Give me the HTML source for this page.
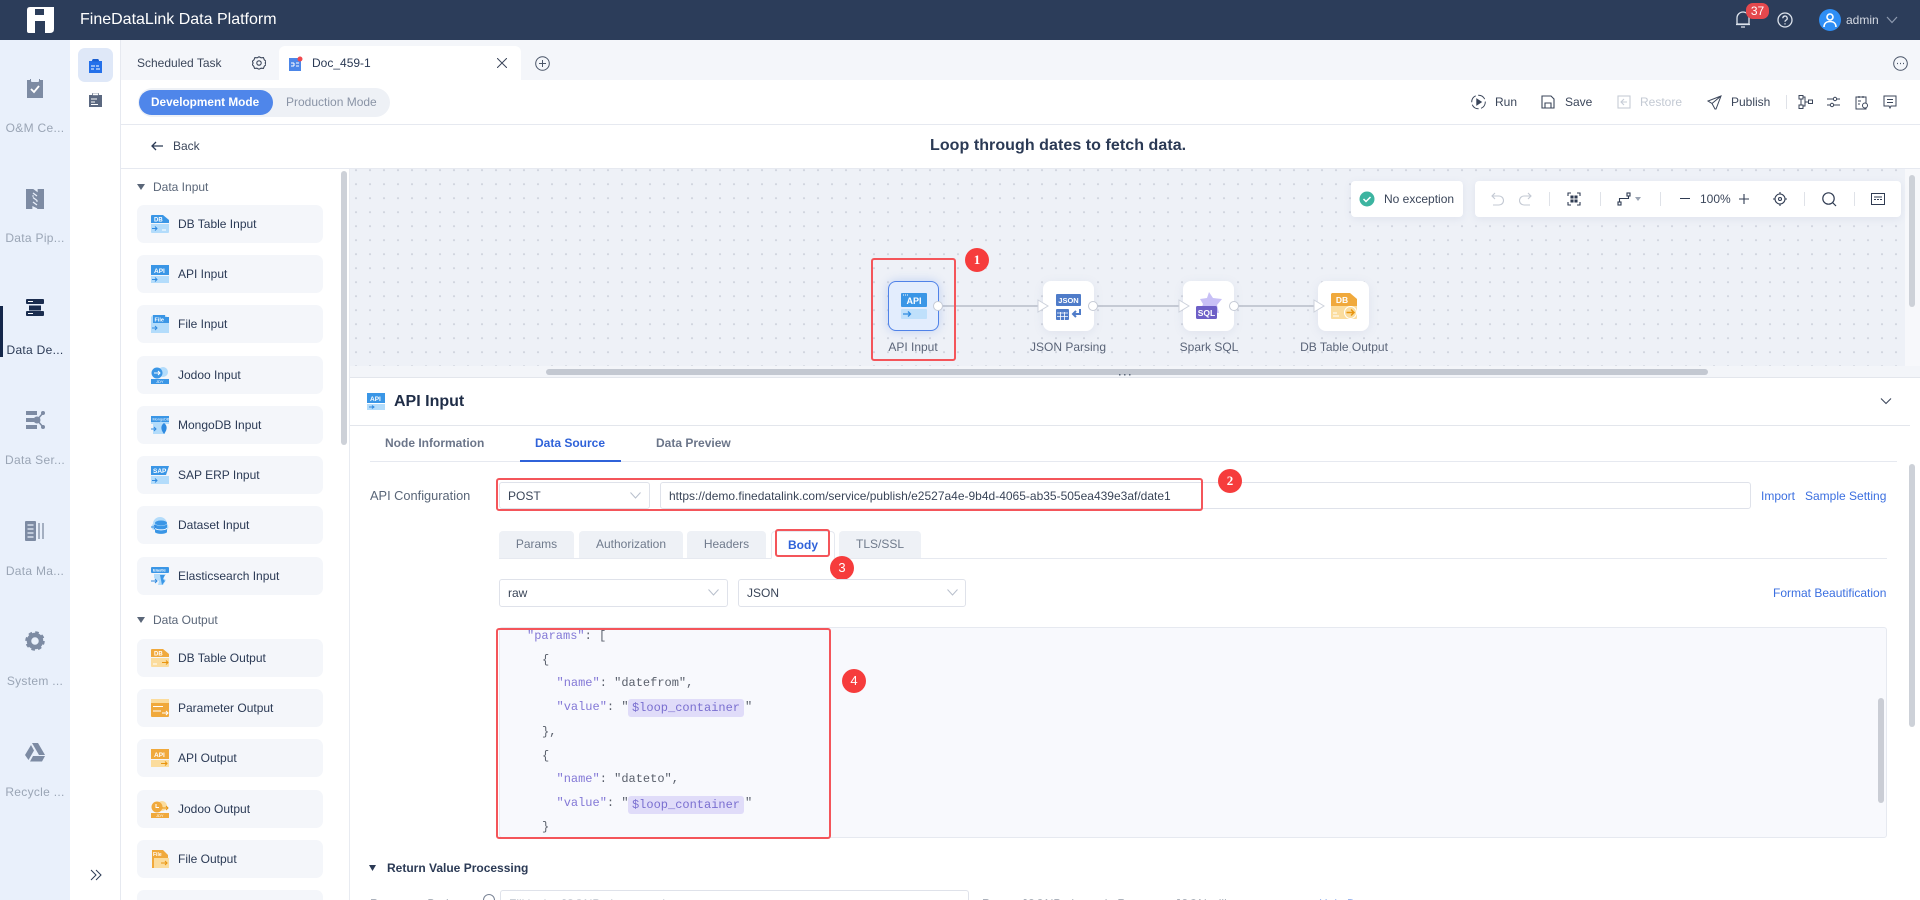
<!DOCTYPE html>
<html><head><meta charset="utf-8"><title>FineDataLink Data Platform</title>
<style>
html,body{margin:0;padding:0;width:1920px;height:900px;overflow:hidden;background:#fff}
body{position:relative;font-family:"Liberation Sans",sans-serif;font-size:12px;color:#2f3b52}
.a,.t,svg.i{position:absolute}
.t{white-space:nowrap;line-height:16px}
.c{text-align:center}
.item{position:absolute;left:137px;width:186px;height:38px;background:#f4f6fa;border-radius:7px}
.item svg{position:absolute;left:14px;top:10px}
.item span{position:absolute;left:41px;top:11px;line-height:16px;color:#2b3a55;white-space:nowrap}
.nav{position:absolute;left:0;width:70px;text-align:center;color:#9aa5b5;line-height:16px;white-space:nowrap;letter-spacing:.3px}
.st{position:absolute;top:531px;height:27px;line-height:27px;background:#eef1f6;border-radius:4px 4px 0 0;text-align:center;color:#6f7a8c;box-sizing:border-box}
.sel{position:absolute;background:#fff;border:1px solid #dfe2ea;border-radius:3px;box-sizing:border-box;line-height:26px;padding-left:8px;color:#3a4558}
.red{position:absolute;border:2px solid #f4555a;border-radius:3px;box-sizing:border-box}
.bd{position:absolute;width:24px;height:24px;border-radius:50%;background:#f63c3c;color:#fff;text-align:center;line-height:24px;font-size:13px}
.node{position:absolute;top:281px;width:51px;height:50px;background:#fff;border-radius:8px;box-shadow:0 2px 10px rgba(120,135,170,.12)}
.port{position:absolute;top:301px;width:8px;height:8px;border:1.5px solid #c5cad5;border-radius:50%;background:#fff}
.line{position:absolute;top:305px;height:2px;background:#c5cad4}
.sep{position:absolute;width:1px;background:#dfe2e8}
.lk{color:#3b6fe0}
.cl{position:absolute;font-family:"Liberation Mono",monospace;font-size:12px;line-height:16px;white-space:pre;color:#5a606c}
.k{color:#8378d6}
.chip{position:absolute;height:18px;line-height:18px;width:116px;background:#e0dcf9;color:#7a6fd0;border-radius:3px;font-family:"Liberation Mono",monospace;font-size:12px;text-align:center}
svg text{font-family:"Liberation Sans",sans-serif}
</style></head><body>

<!-- header -->
<div class="a" style="left:0;top:0;width:1920px;height:40px;background:#2c3d5a"></div>
<svg class="i" style="left:27px;top:7px" width="27" height="26" viewBox="0 0 27 26"><path d="M3 0H27V22Q27 26 23 26H18V14H8V26H2Q0 26 0 24V3Q0 0 3 0ZM8 2V8H17V2Z" fill="#fff" fill-rule="evenodd"/></svg>
<div class="t" style="left:80px;top:12px;font-size:16px;color:#fff">FineDataLink Data Platform</div>
<svg class="i" style="left:1735px;top:11px" width="16" height="18" viewBox="0 0 16 18" fill="none" stroke="#dde3ec" stroke-width="1.3"><path d="M2 13V7a6 6 0 0 1 12 0v6zM1 13.500h14M6 16h4"/></svg>
<div class="a c" style="left:1746px;top:3px;width:23px;height:16px;line-height:16px;background:#e5484d;border-radius:7px;color:#fff;font-size:12px">37</div>
<svg class="i" style="left:1777px;top:12px" width="16" height="16" viewBox="0 0 16 16" fill="none" stroke="#dde3ec" stroke-width="1.3"><circle cx="8" cy="8" r="7"/><path d="M5.800 6.200a2.200 2.200 0 1 1 3.200 2c-.7.4-1 .8-1 1.600M8 11.300v1.200"/></svg>
<svg class="i" style="left:1819px;top:9px" width="22" height="22" viewBox="0 0 22 22"><circle cx="11" cy="11" r="11" fill="#2e8ef5"/><circle cx="11" cy="8" r="3" fill="none" stroke="#fff" stroke-width="1.600"/><path d="M5 18c0-4 3-5.500 6-5.500s6 1.500 6 5.500" fill="none" stroke="#fff" stroke-width="1.600"/></svg>
<div class="t" style="left:1846px;top:12px;color:#d5dae3">admin</div>
<svg class="i" style="left:1886px;top:16px" width="12" height="8" viewBox="0 0 12 8" fill="none" stroke="#8f9bb0" stroke-width="1.200"><path d="M1 1l5 5.500L11 1"/></svg>

<!-- far left nav -->
<div class="a" style="left:0;top:40px;width:70px;height:860px;background:#e9f0fb"></div>
<svg class="i" style="left:26px;top:78px" width="18" height="20" viewBox="0 0 18 20"><path d="M1 2h3V1h10v1h3v18H1z" fill="#7d8ba3"/><rect x="5" y="0" width="8" height="4" rx="1" fill="#e9f0fb"/><path d="M5 11l3 3 5-6" fill="none" stroke="#fff" stroke-width="1.800"/></svg>
<div class="nav" style="top:120px">O&amp;M Ce...</div>
<svg class="i" style="left:26px;top:189px" width="18" height="20" viewBox="0 0 18 20"><rect width="18" height="20" fill="#7d8ba3"/><path d="M7 -1h4v3zM7 4l4 3M7 8.500l4 3M7 13l4 3M7 20v-2l4 2z" stroke="#e9f0fb" stroke-width="1.300" fill="#e9f0fb"/><path d="M7 6v2M11 11v2" stroke="#e9f0fb"/></svg>
<div class="nav" style="top:230px">Data Pip...</div>
<div class="a" style="left:0;top:306px;width:3px;height:51px;background:#14274a"></div>
<svg class="i" style="left:26px;top:299px" width="18" height="18" viewBox="0 0 18 18"><rect x="0" y="0" width="18" height="5" rx="1" fill="#1b2d4f"/><rect x="3" y="6.500" width="12" height="5" fill="#1b2d4f"/><rect x="0" y="12" width="18" height="5" rx="1" fill="#1b2d4f"/><path d="M2 2.500h5M2 14.500h5" stroke="#fff"/></svg>
<div class="nav" style="top:342px;color:#2b3a55">Data De...</div>
<svg class="i" style="left:26px;top:410px" width="19" height="20" viewBox="0 0 19 20" fill="#7d8ba3"><rect x="0" y="1" width="11" height="4"/><rect x="0" y="8" width="8" height="4"/><rect x="0" y="15" width="11" height="4"/><circle cx="11" cy="10" r="3.500"/><circle cx="17" cy="3" r="2"/><circle cx="17" cy="17" r="2"/><path d="M11 10l6-7M11 10l6 7" stroke="#7d8ba3" stroke-width="1.500"/></svg>
<div class="nav" style="top:452px">Data Ser...</div>
<svg class="i" style="left:25px;top:521px" width="20" height="20" viewBox="0 0 20 20"><rect x="0" y="0" width="11" height="20" rx="1" fill="#7d8ba3"/><path d="M2.500 4h6M2.500 8h6M2.500 12h6M2.500 16h6" stroke="#e9f0fb" stroke-width="1.200"/><path d="M14 2v16M18 2v16" stroke="#a4afc1" stroke-width="2"/></svg>
<div class="nav" style="top:563px">Data Ma...</div>
<svg class="i" style="left:25px;top:631px" width="20" height="20" viewBox="0 0 20 20"><circle cx="10" cy="10" r="6" fill="none" stroke="#7d8ba3" stroke-width="4.500"/><circle cx="10" cy="10" r="8.500" fill="none" stroke="#7d8ba3" stroke-width="2.500" stroke-dasharray="3.500 3.170"/></svg>
<div class="nav" style="top:673px">System ...</div>
<svg class="i" style="left:25px;top:743px" width="20" height="19" viewBox="0 0 20 19" fill="#7d8ba3"><path d="M7 0h6l7 12h-6zM6 2l3 5.500L3.500 17 0 12zM8 13h12l-3 5.500H5z"/></svg>
<div class="nav" style="top:784px">Recycle ...</div>

<!-- second column -->
<div class="a" style="left:70px;top:40px;width:50px;height:860px;background:#fff;border-right:1px solid #e6e9f0"></div>
<div class="a" style="left:78px;top:48px;width:35px;height:34px;background:#dfe8f8;border-radius:7px"></div>
<svg class="i" style="left:89px;top:59px" width="13" height="14" viewBox="0 0 13 14"><path d="M0 2h3V1h7v1h3v12H0z" fill="#2470ea"/><rect x="3.500" y="0" width="6" height="2.500" fill="#1b5fd0"/><path d="M2 7h4M2 10h3M7 7h3M7 10h4" stroke="#fff"/></svg>
<svg class="i" style="left:89px;top:93px" width="13" height="14" viewBox="0 0 13 14"><path d="M0 2h3V1h7v1h3v12H0z" fill="#5b6880"/><rect x="3.500" y="0" width="6" height="2.500" fill="#fff" stroke="#5b6880" stroke-width=".6"/><path d="M2 6h6M2 9h4M2 11.500h7" stroke="#fff"/></svg>
<svg class="i" style="left:90px;top:869px" width="12" height="12" viewBox="0 0 12 12" fill="none" stroke="#2b3a55" stroke-width="1"><path d="M1 1l5 5-5 5M6 1l5 5-5 5"/></svg>

<!-- tab strip -->
<div class="a" style="left:121px;top:40px;width:1799px;height:40px;background:#f4f6fa"></div>
<div class="t" style="left:137px;top:55px;color:#3b465a">Scheduled Task</div>
<svg class="i" style="left:252px;top:56px" width="14" height="14" viewBox="0 0 14 14" fill="none" stroke="#3b465a" stroke-width="1.100"><path d="M7 .8l2.100 1 2.300-.2.900 2.200 1.700 1.500-.8 1.700.8 1.700-1.700 1.500-.9 2.200-2.300-.2-2.100 1-2.100-1-2.300.2-.9-2.200L.3 8.700 1.100 7 .3 5.300 2 3.800l.9-2.200 2.300.2z"/><circle cx="7" cy="7" r="2.200"/></svg>
<div class="a" style="left:279px;top:46px;width:242px;height:34px;background:#fff;border-radius:6px 6px 0 0"></div>
<svg class="i" style="left:289px;top:56px" width="14" height="15" viewBox="0 0 14 15"><rect x="0" y="2" width="12" height="13" fill="#4c86e8"/><path d="M2 7h3M2 10h3M7 7h3M7 10h3M5 7v3" stroke="#fff"/><circle cx="11" cy="3" r="2.500" fill="#f0484e"/></svg>
<div class="t" style="left:312px;top:55px;color:#2b3a55">Doc_459-1</div>
<svg class="i" style="left:497px;top:58px" width="10" height="10" viewBox="0 0 10 10" stroke="#3b465a" stroke-width="1"><path d="M0 0l10 10M10 0L0 10"/></svg>
<svg class="i" style="left:535px;top:56px" width="15" height="15" viewBox="0 0 15 15" fill="none" stroke="#4a5568" stroke-width="1"><circle cx="7.500" cy="7.500" r="6.800"/><path d="M7.500 4v7M4 7.500h7"/></svg>
<svg class="i" style="left:1893px;top:56px" width="15" height="15" viewBox="0 0 15 15" fill="none" stroke="#4a5568" stroke-width="1"><circle cx="7.500" cy="7.500" r="6.800"/><path d="M4 7.500h1M7 7.500h1M10 7.500h1" stroke-width="1.300"/></svg>

<!-- mode row -->
<div class="a" style="left:121px;top:124px;width:1799px;height:1px;background:#e6e9f0"></div>
<div class="a" style="left:138px;top:88px;width:252px;height:29px;background:#eef1f6;border-radius:15px"></div>
<div class="a" style="left:139px;top:90px;width:134px;height:25px;background:#4f86ea;border-radius:13px"></div>
<div class="t" style="left:151px;top:94px;color:#fff;font-weight:bold;font-size:11.800px">Development Mode</div>
<div class="t" style="left:286px;top:94px;color:#8a94a6">Production Mode</div>

<svg class="i" style="left:1471px;top:94px" width="15" height="16" viewBox="0 0 15 16" fill="none" stroke="#3b465a" stroke-width="1"><circle cx="7.500" cy="8" r="6.800" stroke-dasharray="8 2.500"/><path d="M5.800 5l4.500 3-4.500 3z" fill="#3b465a"/></svg>
<div class="t" style="left:1495px;top:94px;color:#3b465a">Run</div>
<svg class="i" style="left:1541px;top:95px" width="14" height="14" viewBox="0 0 14 14" fill="none" stroke="#3b465a" stroke-width="1.100"><path d="M1 1h9l3 3v9H1zM4 13V8h6v5"/></svg>
<div class="t" style="left:1565px;top:94px;color:#3b465a">Save</div>
<svg class="i" style="left:1617px;top:95px" width="14" height="14" viewBox="0 0 14 14" fill="none" stroke="#c6ccd6" stroke-width="1.100"><rect x="1" y="1" width="12" height="12"/><path d="M10 7H4M7 4L4 7l3 3"/></svg>
<div class="t" style="left:1640px;top:94px;color:#c3c9d3">Restore</div>
<svg class="i" style="left:1707px;top:95px" width="15" height="15" viewBox="0 0 15 15" fill="none" stroke="#3b465a" stroke-width="1"><path d="M14 1L1 6l4 2.500L8 14l1 0zM14 1L5 8.500"/></svg>
<div class="t" style="left:1731px;top:94px;color:#3b465a">Publish</div>
<div class="sep" style="left:1786px;top:95px;height:14px"></div>
<svg class="i" style="left:1798px;top:95px" width="15" height="14" viewBox="0 0 15 14" fill="none" stroke="#3b465a" stroke-width="1"><rect x="1" y="0.500" width="4" height="3.500"/><rect x="1" y="10" width="4" height="3.500"/><rect x="10.500" y="5" width="4" height="3.500"/><path d="M3 4v6M5 2h2v9H5M7 7h3.500"/></svg>
<svg class="i" style="left:1827px;top:96px" width="13" height="12" viewBox="0 0 13 12" fill="none" stroke="#3b465a" stroke-width="1"><path d="M0 3h13M0 9h13"/><circle cx="8" cy="3" r="1.700" fill="#fff"/><circle cx="5" cy="9" r="1.700" fill="#fff"/></svg>
<svg class="i" style="left:1855px;top:95px" width="14" height="15" viewBox="0 0 14 15" fill="none" stroke="#3b465a" stroke-width="1"><path d="M1 2h10v12H1zM4 1v2M8 1v2M3 6h3M3 9h2"/><circle cx="10" cy="10.500" r="2.500" fill="#fff"/></svg>
<svg class="i" style="left:1883px;top:95px" width="14" height="14" viewBox="0 0 14 14" fill="none" stroke="#3b465a" stroke-width="1"><path d="M1 1h12v10H8l-1 2-1-2H1zM4 4.500h6M4 7.500h6"/></svg>

<!-- back row -->
<div class="a" style="left:121px;top:168px;width:1799px;height:1px;background:#e6e9f0"></div>
<svg class="i" style="left:151px;top:141px" width="12" height="10" viewBox="0 0 12 10" fill="none" stroke="#2b3a55" stroke-width="1.300"><path d="M12 5H1M5 1L1 5l4 4"/></svg>
<div class="t" style="left:173px;top:138px;color:#3b465a">Back</div>
<div class="t" style="left:930px;top:138px;font-size:16px;font-weight:bold;color:#2b3a55;letter-spacing:.06px">Loop through dates to fetch data.</div>

<!-- palette -->
<div class="a" style="left:349px;top:169px;width:1px;height:731px;background:#e8ebf1"></div>
<div class="a" style="left:341px;top:171px;width:6px;height:274px;background:#cdd1d8;border-radius:3px"></div>
<svg class="i" style="left:137px;top:184px" width="8" height="6"><path d="M0 0h8L4 6z" fill="#5a6678"/></svg>
<div class="t" style="left:153px;top:179px;color:#5a6678">Data Input</div>

<div class="item" style="top:205px"><svg width="18" height="18" viewBox="0 0 18 18"><path d="M0 1a1 1 0 0 1 1-1h11l6 5v3H0z" fill="#3a96e6"/><path d="M0 9h18v8a1 1 0 0 1-1 1H1a1 1 0 0 1-1-1z" fill="#b3dcfb"/><text x="3" y="6.500" font-size="6" fill="#fff" font-weight="bold">DB</text><path d="M1 13.500h5M4 11.500l2 2-2 2" stroke="#2f8ae0" fill="none"/><path d="M11 15h4" stroke="#fff"/></svg><span>DB Table Input</span></div>
<div class="item" style="top:255px"><svg width="18" height="18" viewBox="0 0 18 18"><rect width="18" height="10" fill="#3a96e6"/><rect y="11" width="18" height="7" fill="#b3dcfb"/><text x="3" y="8" font-size="6.500" fill="#fff" font-weight="bold">API</text><path d="M1 14.500h5M4 12.500l2 2-2 2" stroke="#2f8ae0" fill="none"/></svg><span>API Input</span></div>
<div class="item" style="top:305px"><svg width="18" height="18" viewBox="0 0 18 18"><path d="M2 0h12l4 4v14H0V2z" fill="#b3dcfb"/><path d="M2 0h12v2H18v6H2z" fill="#3a96e6"/><text x="3.500" y="6.500" font-size="5.500" fill="#fff" font-weight="bold">File</text><path d="M1 13h5M4 11l2 2-2 2" stroke="#2f8ae0" fill="none"/></svg><span>File Input</span></div>
<div class="item" style="top:356px"><svg width="18" height="18" viewBox="0 0 18 18"><circle cx="12" cy="6" r="5" fill="#b3dcfb"/><circle cx="6" cy="7" r="5.500" fill="#3a96e6"/><path d="M3 7h6M7 5l2 2-2 2" stroke="#fff" fill="none"/><rect y="13" width="18" height="5" fill="#3a96e6"/><text x="5" y="17" font-size="4" fill="#fff">JDY</text></svg><span>Jodoo Input</span></div>
<div class="item" style="top:406px"><svg width="18" height="18" viewBox="0 0 18 18"><rect width="18" height="6" fill="#3a96e6"/><path d="M0 6h18v2h-4v10H2V8H0z" fill="#b3dcfb"/><text x="1.500" y="4.500" font-size="3.800" fill="#fff">MongoDB</text><path d="M13 7c3 2 4 6 0 11-4-5-3-9 0-11z" fill="#2f8ae0"/><path d="M0 13h5M3 11l2 2-2 2" stroke="#2f8ae0" fill="none"/></svg><span>MongoDB Input</span></div>
<div class="item" style="top:456px"><svg width="18" height="18" viewBox="0 0 18 18"><path d="M0 0h18l-3 9H0z" fill="#3a96e6"/><rect y="10" width="18" height="8" fill="#b3dcfb"/><text x="2" y="7" font-size="6.500" fill="#fff" font-weight="bold">SAP</text><path d="M1 14.500h5M4 12.500l2 2-2 2" stroke="#2f8ae0" fill="none"/></svg><span>SAP ERP Input</span></div>
<div class="item" style="top:506px"><svg width="18" height="18" viewBox="0 0 18 18"><path d="M2 8a7 7 0 0 1 14 0c2 1 2 6-1 6H3C0 14 0 9 2 8z" fill="#b3dcfb"/><ellipse cx="10" cy="7" rx="6" ry="2.500" fill="#3a96e6"/><path d="M4 8v8c1 2.500 11 2.500 12 0V8c-1 2.500-11 2.500-12 0z" fill="#3a96e6"/><path d="M4 12c1 2.500 11 2.500 12 0" stroke="#fff" fill="none"/><path d="M0 11h5M3 9l2 2-2 2" stroke="#2f8ae0" fill="none"/></svg><span>Dataset Input</span></div>
<div class="item" style="top:557px"><svg width="18" height="18" viewBox="0 0 18 18"><rect width="18" height="6" rx="1" fill="#3a96e6"/><text x="2" y="4.500" font-size="4" fill="#fff" font-weight="bold">Elastic</text><path d="M3 7h12l-3 4 3 2-3 5H7l1-4-5-3z" fill="#b3dcfb"/><path d="M9 8l5 0-2 4 2 2-3 4z" fill="#3a96e6"/><path d="M0 14h6M4 12l2 2-2 2" stroke="#2f8ae0" fill="none"/></svg><span>Elasticsearch Input</span></div>

<svg class="i" style="left:137px;top:617px" width="8" height="6"><path d="M0 0h8L4 6z" fill="#5a6678"/></svg>
<div class="t" style="left:153px;top:612px;color:#5a6678">Data Output</div>

<div class="item" style="top:639px"><svg width="18" height="18" viewBox="0 0 18 18"><path d="M0 1a1 1 0 0 1 1-1h11l6 5v3H0z" fill="#f0a93c"/><path d="M0 9h18v8a1 1 0 0 1-1 1H1a1 1 0 0 1-1-1z" fill="#fbdc9d"/><text x="3" y="6.500" font-size="6" fill="#fff" font-weight="bold">DB</text><path d="M11 13.500h6M15 11.500l2 2-2 2" stroke="#e8950f" fill="none"/><path d="M2 15h4" stroke="#fff"/></svg><span>DB Table Output</span></div>
<div class="item" style="top:689px"><svg width="18" height="18" viewBox="0 0 18 18"><rect width="18" height="18" rx="1" fill="#f0a93c"/><rect width="18" height="4" fill="#fbdc9d"/><path d="M2 7.500h10M2 12h8M11 14h6M15 12l2 2-2 2" stroke="#fff" fill="none"/></svg><span>Parameter Output</span></div>
<div class="item" style="top:739px"><svg width="18" height="18" viewBox="0 0 18 18"><rect width="18" height="10" fill="#f0a93c"/><rect y="11" width="18" height="7" fill="#fbdc9d"/><text x="3" y="8" font-size="6.500" fill="#fff" font-weight="bold">API</text><path d="M10 14.500h6M14 12.500l2 2-2 2" stroke="#e8950f" fill="none"/></svg><span>API Output</span></div>
<div class="item" style="top:790px"><svg width="18" height="18" viewBox="0 0 18 18"><circle cx="11" cy="6" r="5" fill="#fbdc9d"/><circle cx="6" cy="7" r="5.500" fill="#f0a93c"/><path d="M5 4v3.500h3" stroke="#fff" fill="none"/><rect y="13" width="18" height="5" fill="#f0a93c"/><text x="5" y="17" font-size="4" fill="#fff">JDY</text><path d="M11 8h6M15 6l2 2-2 2" stroke="#e8950f" fill="none"/></svg><span>Jodoo Output</span></div>
<div class="item" style="top:840px"><svg width="18" height="18" viewBox="0 0 18 18"><path d="M1 0h11l5 5v13H1z" fill="#f0a93c"/><path d="M3 8h15v10H3z" fill="#fbdc9d"/><text x="2" y="6" font-size="5" fill="#fff" font-weight="bold">File</text><path d="M10 13h6M14 11l2 2-2 2" stroke="#e8950f" fill="none"/></svg><span>File Output</span></div>
<div class="item" style="top:890px"></div>

<!-- canvas -->
<div class="a" style="left:350px;top:169px;width:1570px;height:197px;background-color:#eef1f7;background-image:radial-gradient(circle at 6px 1.200px,#d0d4de .8px,transparent 1.300px);background-size:14px 14px"></div>
<div class="a" style="left:1905px;top:169px;width:15px;height:197px;background:#f7f8fb"></div>
<div class="a" style="left:1909px;top:175px;width:6px;height:132px;background:#cdd1d8;border-radius:3px"></div>
<div class="a" style="left:350px;top:366px;width:1570px;height:11px;background:#f3f5f9;border-bottom:1px solid #e3e6ec"></div>
<div class="a" style="left:546px;top:369px;width:1162px;height:6px;background:#c3c8d1;border-radius:3px"></div>
<svg class="i" style="left:1119px;top:374px" width="14" height="4" fill="#5a6678"><rect x="0" width="1.500" height="1.500"/><rect x="5" width="1.500" height="1.500"/><rect x="10" width="1.500" height="1.500"/></svg>

<div class="a" style="left:1351px;top:181px;width:112px;height:36px;background:#fff;border-radius:4px;box-shadow:0 2px 8px rgba(120,135,170,.12)"></div>
<svg class="i" style="left:1359px;top:191px" width="16" height="16" viewBox="0 0 16 16"><circle cx="8" cy="8" r="7.500" fill="#3cb4a0"/><path d="M4.500 8l2.500 2.500 4.500-4.500" stroke="#fff" stroke-width="1.500" fill="none"/></svg>
<div class="t" style="left:1384px;top:191px;color:#3b465a">No exception</div>
<div class="a" style="left:1475px;top:181px;width:426px;height:36px;background:#fff;border-radius:4px;box-shadow:0 2px 8px rgba(120,135,170,.12)"></div>
<svg class="i" style="left:1491px;top:192px" width="13" height="14" viewBox="0 0 13 14" fill="none" stroke="#c3c9d3" stroke-width="1.100"><path d="M4 1L1 4l3 3M1 4h7a4 4 0 0 1 0 9H2"/></svg>
<svg class="i" style="left:1519px;top:192px" width="13" height="14" viewBox="0 0 13 14" fill="none" stroke="#c3c9d3" stroke-width="1.100"><path d="M9 1l3 3-3 3M12 4H5a4 4 0 0 0 0 9h6"/></svg>
<div class="sep" style="left:1549px;top:192px;height:14px"></div>
<svg class="i" style="left:1567px;top:192px" width="14" height="14" viewBox="0 0 14 14" fill="none" stroke="#2f3b52" stroke-width="1.100"><path d="M1 4V1h3M10 1h3v3M13 10v3h-3M4 13H1v-3"/><path d="M4 4h2v2H4zM8 4h2v2H8zM4 8h2v2H4zM8 8h2v2H8z" fill="#2f3b52"/></svg>
<div class="sep" style="left:1600px;top:192px;height:14px"></div>
<svg class="i" style="left:1617px;top:192px" width="14" height="14" viewBox="0 0 14 14" fill="none" stroke="#2f3b52" stroke-width="1.100"><rect x="1" y="10" width="3" height="3"/><rect x="10" y="1" width="3" height="3"/><path d="M2.500 10V6.500h9V4"/></svg>
<svg class="i" style="left:1635px;top:197px" width="6" height="4"><path d="M0 0h6L3 4z" fill="#9aa3b2"/></svg>
<div class="sep" style="left:1660px;top:192px;height:14px"></div>
<div class="a" style="left:1680px;top:198px;width:10px;height:1px;background:#2f3b52"></div>
<div class="t" style="left:1700px;top:191px;color:#3b465a">100%</div>
<svg class="i" style="left:1739px;top:194px" width="10" height="10" stroke="#2f3b52" stroke-width="1.100"><path d="M5 0v10M0 5h10"/></svg>
<svg class="i" style="left:1773px;top:192px" width="14" height="14" viewBox="0 0 14 14" fill="none" stroke="#2f3b52" stroke-width="1.100"><circle cx="7" cy="7" r="5"/><circle cx="7" cy="7" r="1.500"/><path d="M7 0v2.500M7 11.500V14M0 7h2.500M11.500 7H14"/></svg>
<div class="sep" style="left:1804px;top:192px;height:14px"></div>
<svg class="i" style="left:1822px;top:192px" width="15" height="15" viewBox="0 0 15 15" fill="none" stroke="#2f3b52" stroke-width="1.200"><circle cx="6.500" cy="6.500" r="5.700"/><path d="M10.500 10.500l3.500 3.500"/></svg>
<div class="sep" style="left:1854px;top:192px;height:14px"></div>
<svg class="i" style="left:1871px;top:193px" width="14" height="12" viewBox="0 0 14 12" fill="none" stroke="#2f3b52" stroke-width="1"><rect x=".5" y=".5" width="13" height="11"/><path d="M3 4h8M3 6.500h2M6 6.500h2M9 6.500h2" stroke-width=".9"/></svg>

<!-- flow -->
<div class="line" style="left:943px;width:95px"></div>
<div class="line" style="left:1097px;width:82px"></div>
<div class="line" style="left:1238px;width:76px"></div>
<div class="node" style="left:888px;background:#e3edfd;border:1px solid #4f82e8;box-sizing:border-box;box-shadow:0 0 10px rgba(79,130,232,.3)"></div>
<svg class="i" style="left:901px;top:293px" width="26" height="27" viewBox="0 0 26 27"><rect width="26" height="14" rx="1" fill="#3a96e6"/><rect y="16" width="26" height="10" rx="1" fill="#bfe0fb"/><text x="13" y="11" text-anchor="middle" font-size="9" font-weight="bold" fill="#fff">API</text><path d="M2 2h5" stroke="#fff" stroke-dasharray="1 1"/><path d="M2 21h7M7 18.500l2.500 2.500L7 23.500" stroke="#2f8ae0" stroke-width="1.300" fill="none"/></svg>
<div class="node" style="left:1043px"></div>
<svg class="i" style="left:1056px;top:294px" width="26" height="26" viewBox="0 0 26 26"><rect width="25" height="12" rx="1" fill="#4f7cc9"/><text x="12.500" y="9" text-anchor="middle" font-size="7.500" font-weight="bold" fill="#fff">JSON</text><rect x="0" y="15" width="13" height="11" rx="1" fill="#4f7cc9"/><path d="M1 19h11M1 22.500h11M4.500 18v8M8.500 18v8" stroke="#fff" stroke-width=".8"/><path d="M24 15v5h-6M20 17l-3 3 3 3" stroke="#4f7cc9" stroke-width="2" fill="none"/></svg>
<div class="node" style="left:1183px"></div>
<svg class="i" style="left:1196px;top:292px" width="30" height="28" viewBox="0 0 30 28"><path d="M13 0l4 6 9 1-5 6 2 8-10-1-9 0 3-8-3-5 7-1z" fill="#c8c0f6"/><rect y="14" width="21" height="13" rx="1.500" fill="#6d5fc7"/><text x="10.500" y="24" text-anchor="middle" font-size="8.500" font-weight="bold" fill="#fff">SQL</text></svg>
<div class="node" style="left:1318px"></div>
<svg class="i" style="left:1331px;top:293px" width="26" height="26" viewBox="0 0 26 26"><path d="M1 0h18l7 6v8H0V1z" fill="#f0a93c"/><path d="M0 13h26v12a1 1 0 0 1-1 1H1a1 1 0 0 1-1-1z" fill="#fbdc9d"/><text x="11" y="10" text-anchor="middle" font-size="8.500" font-weight="bold" fill="#fff">DB</text><path d="M2 20h4M2 23h6" stroke="#fff"/><circle cx="19.500" cy="19.500" r="6" fill="#fbdc9d" stroke="#fff"/><path d="M15.500 19.500h7M20 16.500l3 3-3 3" stroke="#e8950f" stroke-width="1.500" fill="none"/></svg>
<div class="port" style="left:933px"></div>
<div class="port" style="left:1088px"></div>
<div class="port" style="left:1229px"></div>
<svg class="i" style="left:1037px;top:299px" width="12" height="14"><path d="M1 1l10 6-10 6z" fill="#fff" stroke="#cdd2dc"/></svg>
<svg class="i" style="left:1178px;top:299px" width="12" height="14"><path d="M1 1l10 6-10 6z" fill="#fff" stroke="#cdd2dc"/></svg>
<svg class="i" style="left:1313px;top:299px" width="12" height="14"><path d="M1 1l10 6-10 6z" fill="#fff" stroke="#cdd2dc"/></svg>
<div class="t c" style="left:863px;top:339px;width:100px;color:#5a6478">API Input</div>
<div class="t c" style="left:1018px;top:339px;width:100px;color:#5a6478">JSON Parsing</div>
<div class="t c" style="left:1159px;top:339px;width:100px;color:#5a6478">Spark SQL</div>
<div class="t c" style="left:1284px;top:339px;width:120px;color:#5a6478">DB Table Output</div>
<div class="red" style="left:871px;top:258px;width:85px;height:103px"></div>
<div class="bd" style="left:965px;top:248px;font-family:'Liberation Serif',serif;font-weight:bold">1</div>

<!-- panel -->
<svg class="i" style="left:367px;top:393px" width="18" height="17" viewBox="0 0 18 17"><rect width="18" height="10" fill="#3a96e6"/><rect y="11" width="18" height="6" fill="#b3dcfb"/><text x="3" y="8" font-size="6.500" fill="#fff" font-weight="bold">API</text><path d="M2 14h5M5 12.500l2 1.500-2 1.500" stroke="#2f8ae0" fill="none"/></svg>
<div class="t" style="left:394px;top:394px;font-size:16px;font-weight:bold;color:#1f2d47">API Input</div>
<svg class="i" style="left:1880px;top:398px" width="12" height="7" viewBox="0 0 12 7" fill="none" stroke="#3b465a" stroke-width="1.100"><path d="M1 .5l5 5 5-5"/></svg>
<div class="a" style="left:350px;top:425px;width:1560px;height:1px;background:#e3e6ec"></div>
<div class="t" style="left:385px;top:435px;font-weight:bold;color:#6b7589">Node Information</div>
<div class="t" style="left:535px;top:435px;font-weight:bold;color:#2f62d9">Data Source</div>
<div class="t" style="left:656px;top:435px;font-weight:bold;color:#6b7589">Data Preview</div>
<div class="a" style="left:370px;top:461px;width:1527px;height:1px;background:#e6e9f0"></div>
<div class="a" style="left:520px;top:460px;width:101px;height:2px;background:#2f62d9"></div>
<div class="a" style="left:1909px;top:464px;width:6px;height:263px;background:#cdd1d8;border-radius:3px"></div>

<div class="t" style="left:370px;top:488px;font-size:12.800px;color:#5a6678">API Configuration</div>
<div class="sel" style="left:499px;top:482px;width:151px;height:27px">POST</div>
<svg class="i chev" style="left:630px;top:492px" width="11" height="7" viewBox="0 0 11 7" fill="none" stroke="#b8bfcc"><path d="M.5.500l5 5.500 5-5.500"/></svg>
<div class="sel" style="left:660px;top:482px;width:1091px;height:27px">https://demo.finedatalink.com/service/publish/e2527a4e-9b4d-4065-ab35-505ea439e3af/date1</div>
<div class="red" style="left:496px;top:478px;width:707px;height:33px"></div>
<div class="bd" style="left:1218px;top:469px;font-family:'Liberation Serif',serif;font-weight:bold">2</div>
<div class="t lk" style="left:1761px;top:488px">Import</div>
<div class="t lk" style="left:1805px;top:488px">Sample Setting</div>

<div class="a" style="left:499px;top:558px;width:1388px;height:1px;background:#e6e9f0"></div>
<div class="st" style="left:499px;width:75px">Params</div>
<div class="st" style="left:579px;width:104px">Authorization</div>
<div class="st" style="left:687px;width:79px">Headers</div>
<div class="st" style="left:771px;width:64px;background:#fff;border:1px solid #e6e9f0;border-bottom:1px solid #fff;height:28px;color:#2f62d9;font-weight:bold;line-height:26px">Body</div>
<div class="st" style="left:839px;width:82px">TLS/SSL</div>
<div class="red" style="left:775px;top:529px;width:55px;height:28px"></div>
<div class="bd" style="left:830px;top:556px">3</div>

<div class="sel" style="left:499px;top:579px;width:229px;height:28px">raw</div>
<svg class="i" style="left:708px;top:589px" width="11" height="7" viewBox="0 0 11 7" fill="none" stroke="#b8bfcc"><path d="M.5.500l5 5.500 5-5.500"/></svg>
<div class="sel" style="left:738px;top:579px;width:228px;height:28px">JSON</div>
<svg class="i" style="left:947px;top:589px" width="11" height="7" viewBox="0 0 11 7" fill="none" stroke="#b8bfcc"><path d="M.5.500l5 5.500 5-5.500"/></svg>
<div class="t lk" style="left:1773px;top:585px">Format Beautification</div>

<div class="a" style="left:499px;top:627px;width:1388px;height:211px;background:#f8f9fd;border:1px solid #e6e9f0;box-sizing:border-box;border-radius:3px"></div>
<div class="a" style="left:1878px;top:698px;width:6px;height:105px;background:#cacdd5;border-radius:3px"></div>
<div class="cl" style="left:527px;top:628px"><span class="k">"params"</span>: [</div>
<div class="cl" style="left:542px;top:652px">{</div>
<div class="cl" style="left:556.500px;top:675px"><span class="k">"name"</span>: "datefrom",</div>
<div class="cl" style="left:556.500px;top:699px"><span class="k">"value"</span>: "</div>
<div class="chip" style="left:628px;top:699px">$loop_container</div>
<div class="cl" style="left:745px;top:699px">"</div>
<div class="cl" style="left:542px;top:724px">},</div>
<div class="cl" style="left:542px;top:748px">{</div>
<div class="cl" style="left:556.500px;top:771px"><span class="k">"name"</span>: "dateto",</div>
<div class="cl" style="left:556.500px;top:795px"><span class="k">"value"</span>: "</div>
<div class="chip" style="left:628px;top:796px">$loop_container</div>
<div class="cl" style="left:745px;top:795px">"</div>
<div class="cl" style="left:542px;top:819px">}</div>
<div class="red" style="left:496px;top:628px;width:335px;height:211px"></div>
<div class="bd" style="left:842px;top:669px">4</div>

<svg class="i" style="left:369px;top:865px" width="7" height="6"><path d="M0 0h7L3.500 6z" fill="#2b3a55"/></svg>
<div class="t" style="left:387px;top:860px;font-weight:bold;color:#2b3a55">Return Value Processing</div>
<div class="t" style="left:370px;top:896px;color:#5a6678">Response Body</div>
<svg class="i" style="left:483px;top:894px" width="12" height="12" fill="none" stroke="#7a8496"><circle cx="6" cy="6" r="5.500"/></svg>
<div class="a" style="left:500px;top:890px;width:469px;height:30px;border:1px solid #dfe2ea;border-radius:3px;box-sizing:border-box"></div>
<div class="t" style="left:509px;top:896px;color:#9aa3b2">Fill in the JSONPath expression</div>
<div class="t" style="left:982px;top:896px;color:#5a6678">Return JSONPath result. Response JSON will return as a</div>
<div class="t lk" style="left:1319px;top:896px">Help Doc</div>
</body></html>
